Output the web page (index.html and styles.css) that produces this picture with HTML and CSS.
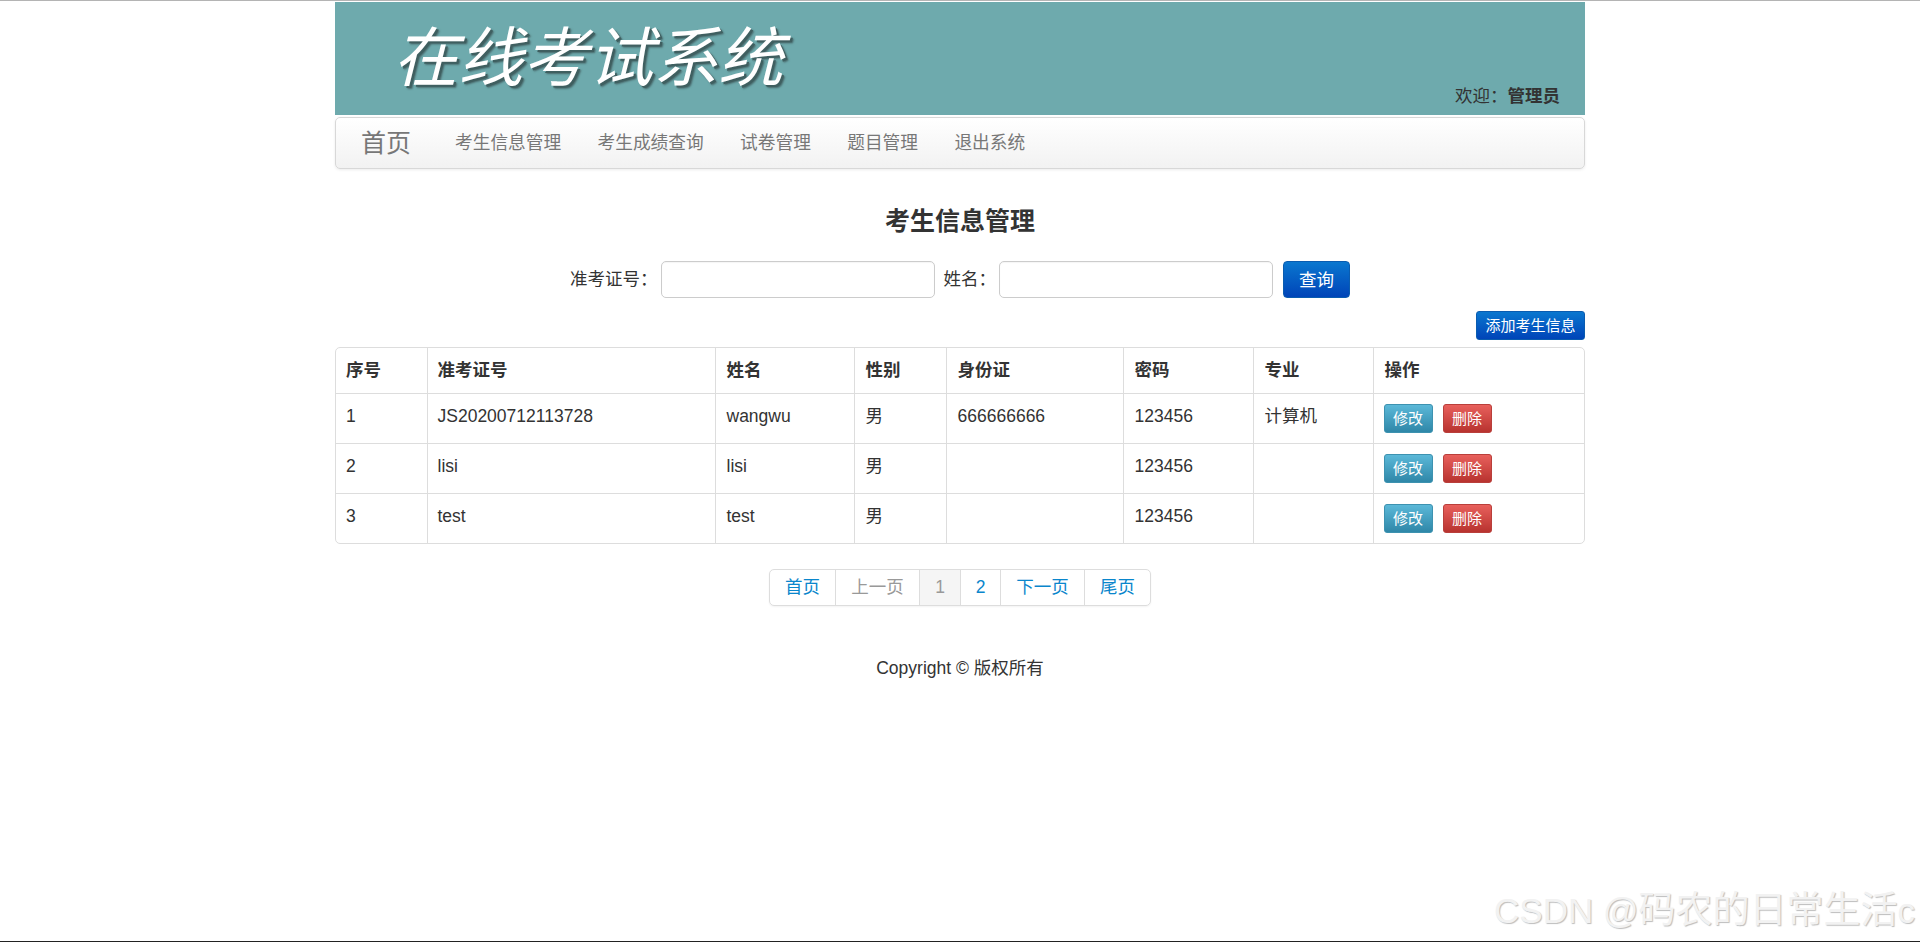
FILE: index.html
```html
<!DOCTYPE html>
<html lang="zh-CN">
<head>
<meta charset="utf-8">
<title>在线考试系统</title>
<link rel="stylesheet" href="styles.css">
</head>
<body>
<div class="page">
  <header class="banner">
    <div class="logo">在线考试系统</div>
    <div class="welcome">欢迎：<b>管理员</b></div>
  </header>
  <nav class="navbar">
    <a class="brand">首页</a>
    <a class="nav-link">考生信息管理</a>
    <a class="nav-link">考生成绩查询</a>
    <a class="nav-link">试卷管理</a>
    <a class="nav-link">题目管理</a>
    <a class="nav-link">退出系统</a>
  </nav>
  <h1 class="title">考生信息管理</h1>
  <form class="search">
    <label class="lbl lbl-a">准考证号：</label>
    <input class="field" type="text">
    <label class="lbl lbl-b">姓名：</label>
    <input class="field" type="text">
    <button class="btn btn-primary btn-query" type="button">查询</button>
  </form>
  <div class="actions"><button class="btn btn-primary btn-add" type="button">添加考生信息</button></div>
  <div class="table-wrap">
    <table class="grid">
      <colgroup>
        <col class="c1"><col class="c2"><col class="c3"><col class="c4"><col class="c5"><col class="c6"><col class="c7"><col class="c8">
      </colgroup>
      <thead>
        <tr><th>序号</th><th>准考证号</th><th>姓名</th><th>性别</th><th>身份证</th><th>密码</th><th>专业</th><th>操作</th></tr>
      </thead>
      <tbody>
        <tr><td>1</td><td>JS20200712113728</td><td>wangwu</td><td>男</td><td>666666666</td><td>123456</td><td>计算机</td>
          <td class="ops"><button class="btn btn-info btn-xs" type="button">修改</button><button class="btn btn-danger btn-xs" type="button">删除</button></td></tr>
        <tr><td>2</td><td>lisi</td><td>lisi</td><td>男</td><td></td><td>123456</td><td></td>
          <td class="ops"><button class="btn btn-info btn-xs" type="button">修改</button><button class="btn btn-danger btn-xs" type="button">删除</button></td></tr>
        <tr><td>3</td><td>test</td><td>test</td><td>男</td><td></td><td>123456</td><td></td>
          <td class="ops"><button class="btn btn-info btn-xs" type="button">修改</button><button class="btn btn-danger btn-xs" type="button">删除</button></td></tr>
      </tbody>
    </table>
  </div>
  <div class="pager-row">
    <ul class="pager">
      <li class="p p1"><a>首页</a></li>
      <li class="p p2 muted"><a>上一页</a></li>
      <li class="p p3 current"><a>1</a></li>
      <li class="p p4"><a>2</a></li>
      <li class="p p5"><a>下一页</a></li>
      <li class="p p6"><a>尾页</a></li>
    </ul>
  </div>
  <footer class="copy">Copyright © 版权所有</footer>
</div>
<div class="watermark">CSDN @<span class="wm-cjk">码农的日常生活</span>c</div>
</body>
</html>
```
FILE: styles.css
```css
* { box-sizing: border-box; }
html, body { height: 100%; }
body {
  margin: 0;
  height: 942px;
  overflow: hidden;
  border-top: 1px solid #b4b4b4;
  border-bottom: 1px solid #222;
  background: #fff;
  color: #333;
  font-family: "Liberation Sans", "Noto Sans CJK SC", sans-serif;
  font-size: 17.5px;
  line-height: 25px;
}
.page { width: 1250px; margin: 0 auto; padding-top: 1px; }
.banner {
  height: 113px;
  background: #6eaaad;
  display: flex;
  justify-content: space-between;
  align-items: flex-end;
  padding: 0 25px 6px 58px;
}
.logo {
  align-self: flex-start;
  margin-top: 18px;
  font-size: 65px;
  line-height: 78px;
  font-style: italic;
  font-weight: 400;
  color: #fff;
  text-shadow: 2px 2px 0 #3f5f60, 3px 3px 2px #47686a;
}
.welcome { color: #333; }
.navbar {
  height: 52px;
  margin-top: 2px;
  display: flex;
  align-items: center;
  padding-left: 25px;
  border: 1px solid #d8d8d8;
  border-radius: 5px;
  background: linear-gradient(to bottom, #fff, #f2f2f2);
  box-shadow: 0 1px 3px rgba(0,0,0,.08);
  color: #777;
}
.brand { font-size: 25px; width: 94px; color: #777; }
.nav-link { margin-right: 36.4px; font-size: 17.7px; color: #777; }
.title {
  margin: 37px 0 0;
  height: 30px;
  text-align: center;
  font-size: 25px;
  line-height: 30px;
  font-weight: 700;
  color: #333;
}
.search {
  display: flex;
  justify-content: center;
  align-items: center;
  height: 37px;
  margin-top: 25px;
}
.lbl-a { margin-right: 3px; }
.lbl-b { margin: 0 3px 0 9px; }
.field {
  width: 274px;
  height: 37px;
  border: 1px solid #ccc;
  border-radius: 5px;
  background: #fff;
  box-shadow: inset 0 1px 1px rgba(0,0,0,.04);
}
.btn {
  display: inline-flex;
  align-items: center;
  justify-content: center;
  padding: 0;
  color: #fff;
  font-family: inherit;
  border-radius: 3px;
  border: 1px solid transparent;
}
.btn-primary {
  background: linear-gradient(to bottom, #0a77cf, #0044b8);
  border-color: #0a5cb0;
}
.btn-query {
  width: 67px;
  height: 37px;
  margin-left: 10px;
  padding-bottom: 2px;
  font-size: 17.5px;
  border-radius: 4px;
}
.actions { display: flex; justify-content: flex-end; margin-top: 13px; }
.btn-add { width: 109px; height: 29px; padding-bottom: 2px; font-size: 15px; }
.table-wrap {
  margin-top: 7px;
  border: 1px solid #ddd;
  border-radius: 5px;
  overflow: hidden;
}
.grid { width: 100%; border-collapse: collapse; table-layout: fixed; }
.c1 { width: 91px; }
.c2 { width: 288px; }
.c3 { width: 139px; }
.c4 { width: 92px; }
.c5 { width: 177px; }
.c6 { width: 130px; }
.c7 { width: 120px; }
.grid th, .grid td {
  border: 1px solid #ddd;
  padding: 0 10px;
  text-align: left;
  vertical-align: top;
}
.grid th:nth-child(n+3), .grid td:nth-child(n+3) { padding-left: 11px; }
.grid td.ops { padding-left: 10px; }
.grid tr > :first-child { border-left: 0; }
.grid tr > :last-child { border-right: 0; }
.grid thead tr:first-child th { border-top: 0; }
.grid tbody tr:last-child td { border-bottom: 0; }
.grid th { height: 45px; padding-top: 10px; font-weight: 700; }
.grid td { height: 50px; padding-top: 10px; }
.btn-xs { width: 49px; height: 29px; padding-bottom: 2px; font-size: 15px; vertical-align: top; }
.btn-info {
  background: linear-gradient(to bottom, #5bb8d8, #2f87a8);
  border-color: #3d92b0;
}
.btn-danger {
  background: linear-gradient(to bottom, #e8605c, #b8332f);
  border-color: #b93f3b;
  margin-left: 10px;
}
.pager-row { display: flex; justify-content: center; margin-top: 25px; }
.pager {
  display: flex;
  list-style: none;
  margin: 0;
  padding: 0;
  height: 37px;
  border: 1px solid #ddd;
  border-radius: 5px;
  box-shadow: 0 1px 2px rgba(0,0,0,.05);
  overflow: hidden;
  color: #0a86cc;
}
.p { display: flex; align-items: center; justify-content: center; border-right: 1px solid #ddd; }
.p:last-child { border-right: 0; }
.p1 { width: 66px; }
.p2 { width: 84px; }
.p3 { width: 41px; }
.p4 { width: 40px; }
.p5 { width: 84px; }
.p6 { width: 65px; }
.muted { color: #999; }
.current { background: #f5f5f5; color: #999; }
.copy { margin-top: 50px; text-align: center; color: #333; }
.watermark {
  position: absolute;
  right: 5px;
  bottom: 6px;
  font-size: 35px;
  line-height: 50px;
  color: #f2f2f2;
  text-shadow: 1px 1px 1px #bdbdbd;
  white-space: nowrap;
}
.wm-cjk { font-size: 37px; }
```
